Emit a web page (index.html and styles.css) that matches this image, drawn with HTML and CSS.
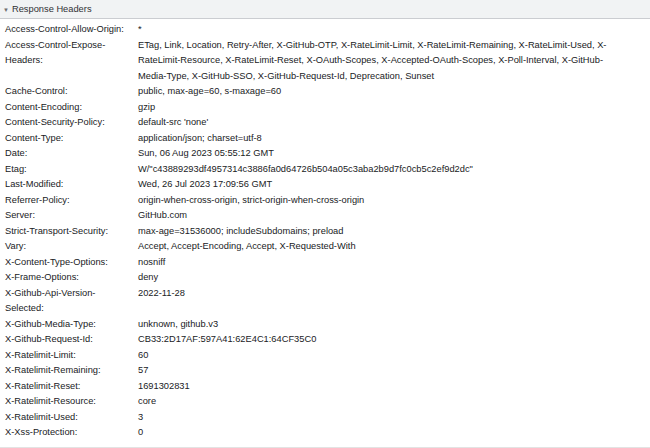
FILE: index.html
```html
<!DOCTYPE html>
<html>
<head>
<meta charset="utf-8">
<link rel="stylesheet" href="styles.css">
</head>
<body>
<div class="panel">
  <div class="section-header"><span class="tri">▼</span>Response Headers</div>
  <div class="rows">
    <div class="row"><div class="key">Access-Control-Allow-Origin:</div><div class="val">*</div></div>
    <div class="row"><div class="key">Access-Control-Expose-Headers:</div><div class="val">ETag, Link, Location, Retry-After, X-GitHub-OTP, X-RateLimit-Limit, X-RateLimit-Remaining, X-RateLimit-Used, X-RateLimit-Resource, X-RateLimit-Reset, X-OAuth-Scopes, X-Accepted-OAuth-Scopes, X-Poll-Interval, X-GitHub-Media-Type, X-GitHub-SSO, X-GitHub-Request-Id, Deprecation, Sunset</div></div>
    <div class="row"><div class="key">Cache-Control:</div><div class="val">public, max-age=60, s-maxage=60</div></div>
    <div class="row"><div class="key">Content-Encoding:</div><div class="val">gzip</div></div>
    <div class="row"><div class="key">Content-Security-Policy:</div><div class="val">default-src 'none'</div></div>
    <div class="row"><div class="key">Content-Type:</div><div class="val">application/json; charset=utf-8</div></div>
    <div class="row"><div class="key">Date:</div><div class="val">Sun, 06 Aug 2023 05:55:12 GMT</div></div>
    <div class="row"><div class="key">Etag:</div><div class="val">W/"c43889293df4957314c3886fa0d64726b504a05c3aba2b9d7fc0cb5c2ef9d2dc"</div></div>
    <div class="row"><div class="key">Last-Modified:</div><div class="val">Wed, 26 Jul 2023 17:09:56 GMT</div></div>
    <div class="row"><div class="key">Referrer-Policy:</div><div class="val">origin-when-cross-origin, strict-origin-when-cross-origin</div></div>
    <div class="row"><div class="key">Server:</div><div class="val">GitHub.com</div></div>
    <div class="row"><div class="key">Strict-Transport-Security:</div><div class="val">max-age=31536000; includeSubdomains; preload</div></div>
    <div class="row"><div class="key">Vary:</div><div class="val">Accept, Accept-Encoding, Accept, X-Requested-With</div></div>
    <div class="row"><div class="key">X-Content-Type-Options:</div><div class="val">nosniff</div></div>
    <div class="row"><div class="key">X-Frame-Options:</div><div class="val">deny</div></div>
    <div class="row"><div class="key">X-Github-Api-Version-Selected:</div><div class="val">2022-11-28</div></div>
    <div class="row"><div class="key">X-Github-Media-Type:</div><div class="val">unknown, github.v3</div></div>
    <div class="row"><div class="key">X-Github-Request-Id:</div><div class="val">CB33:2D17AF:597A41:62E4C1:64CF35C0</div></div>
    <div class="row"><div class="key">X-Ratelimit-Limit:</div><div class="val">60</div></div>
    <div class="row"><div class="key">X-Ratelimit-Remaining:</div><div class="val">57</div></div>
    <div class="row"><div class="key">X-Ratelimit-Reset:</div><div class="val">1691302831</div></div>
    <div class="row"><div class="key">X-Ratelimit-Resource:</div><div class="val">core</div></div>
    <div class="row"><div class="key">X-Ratelimit-Used:</div><div class="val">3</div></div>
    <div class="row"><div class="key">X-Xss-Protection:</div><div class="val">0</div></div>
  </div>
</div>
</body>
</html>
```
FILE: styles.css
```css
html, body {
  margin: 0;
  padding: 0;
  background: #ffffff;
}
body {
  font-family: "Liberation Sans", Arial, sans-serif;
  font-size: 9.3px;
  color: #202124;
  width: 650px;
  height: 448px;
  overflow: hidden;
}
.panel {
  height: 447px;
  border-bottom: 1px solid #e3e3e3;
  display: flex;
  flex-direction: column;
}
.section-header {
  height: 18px;
  background: #f1f3f4;
  border-bottom: 1px solid #cbcdd1;
  display: flex;
  align-items: center;
  padding-left: 3px;
  color: #303134;
  font-size: 9.3px;
}
.tri {
  font-size: 6px;
  color: #6e6e6e;
  margin-right: 3px;
  position: relative;
  top: 0.5px;
}
.rows {
  padding-top: 3px;
  display: flex;
  flex-direction: column;
}
.row {
  display: grid;
  grid-template-columns: 128px 1fr;
  column-gap: 5px;
  padding-left: 5px;
  padding-right: 30px;
  line-height: 15.5px;
}
.key, .val {
  overflow-wrap: break-word;
}
```
